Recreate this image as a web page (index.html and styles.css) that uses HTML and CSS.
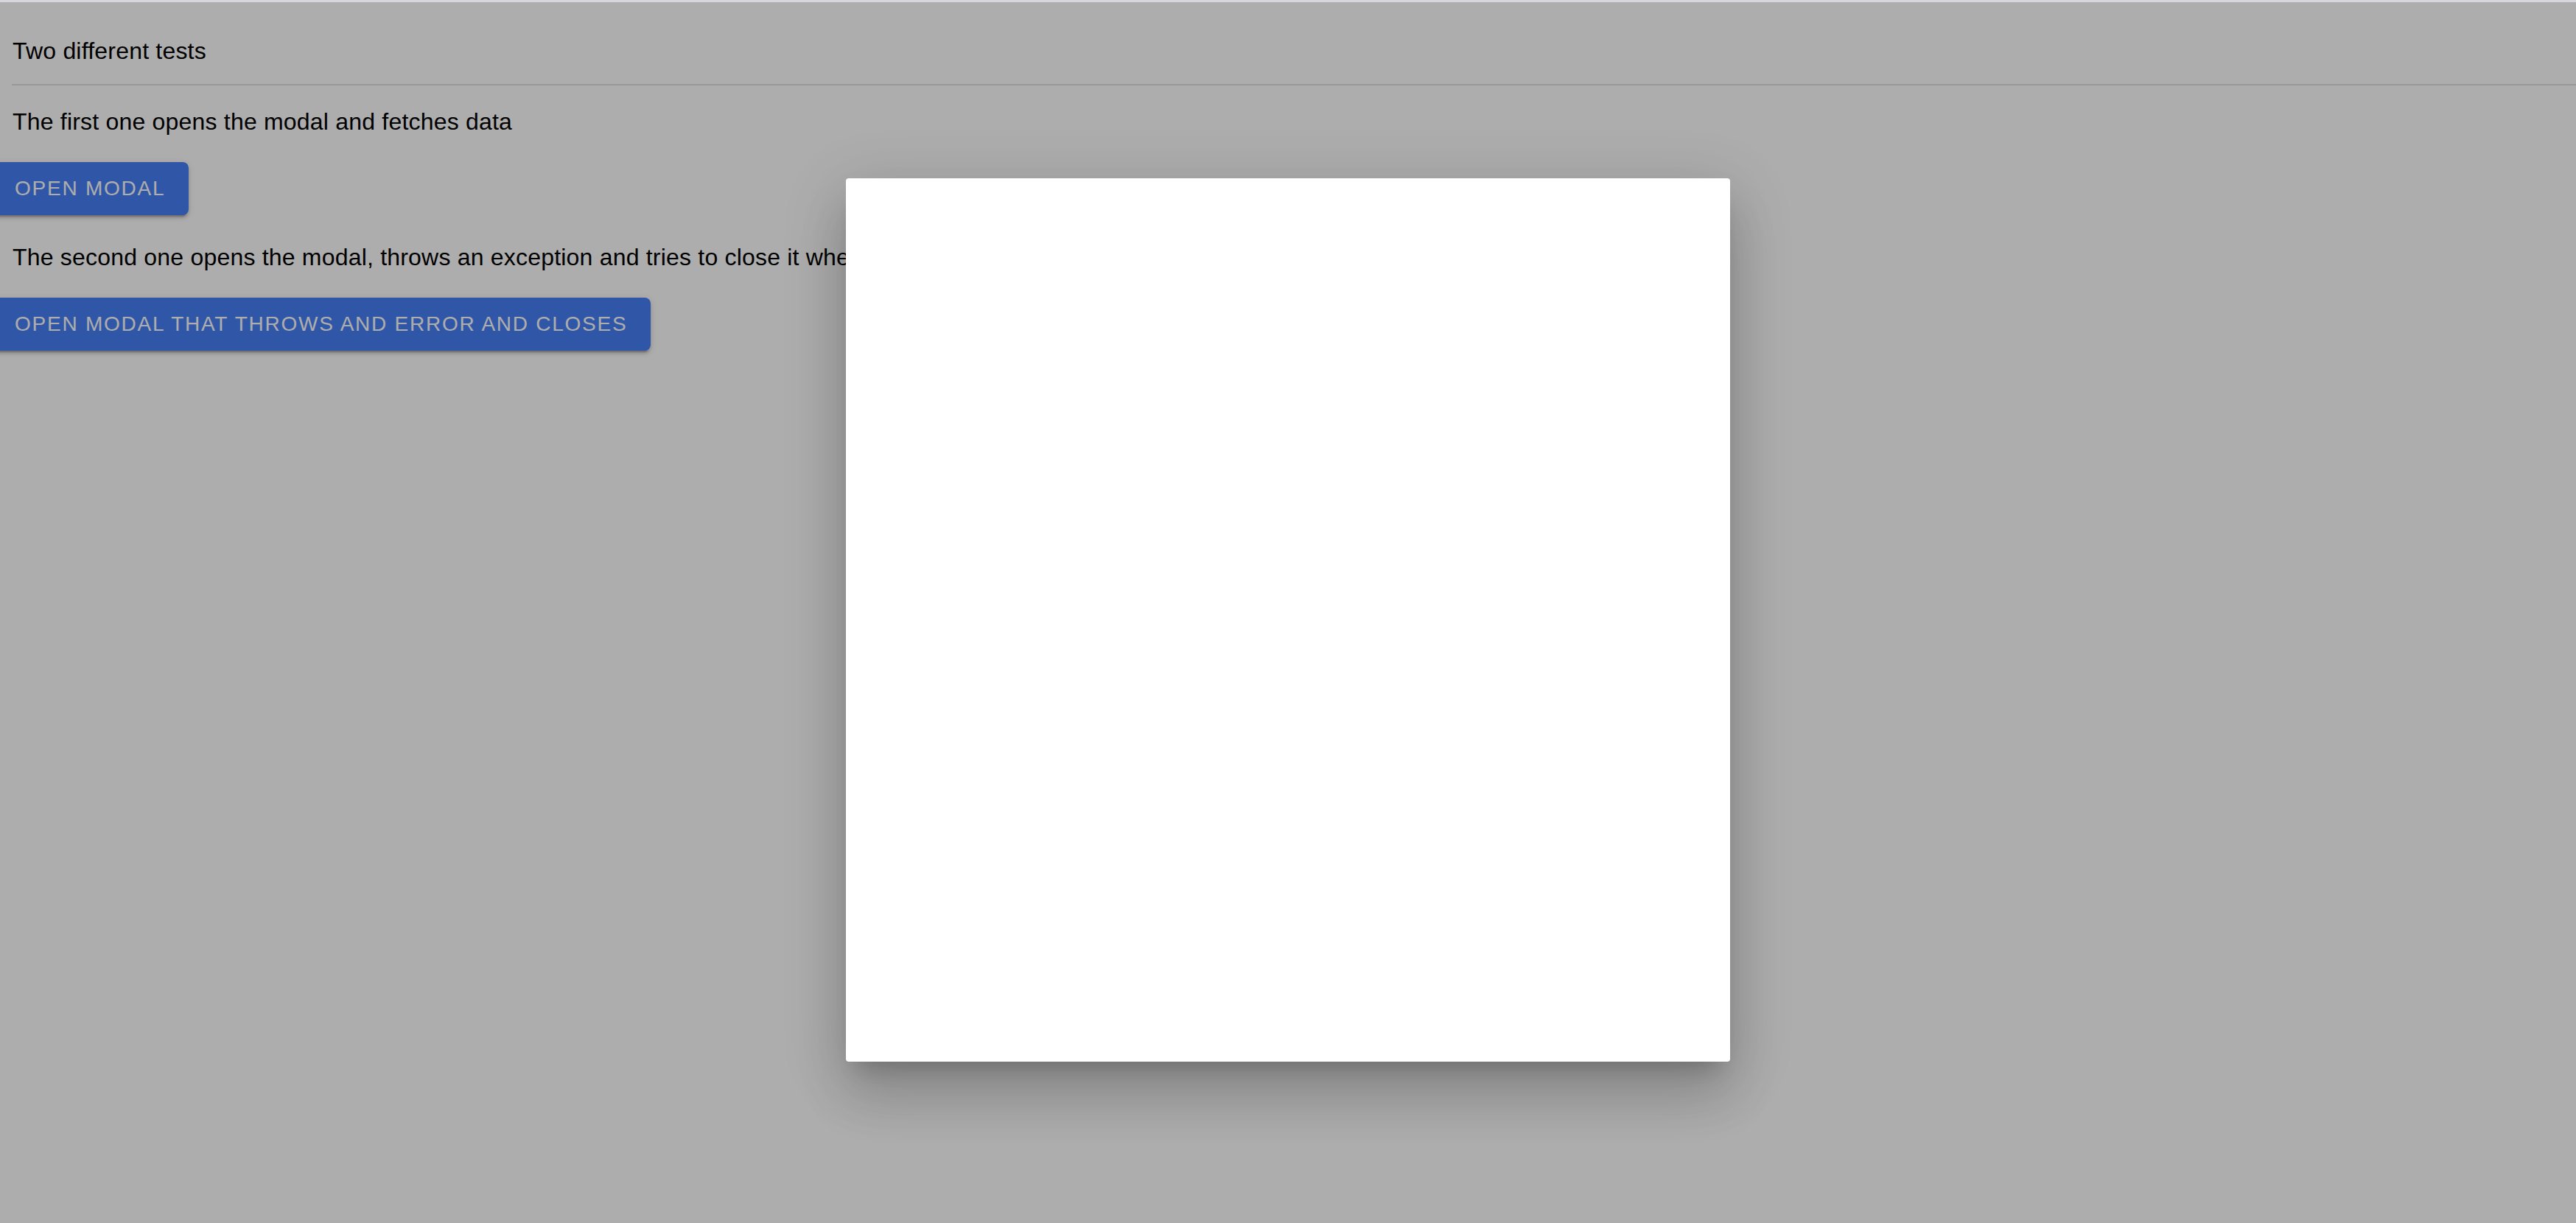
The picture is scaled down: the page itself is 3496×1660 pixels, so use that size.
FILE: index.html
```html
<!DOCTYPE html>
<html lang="en">
<head>
<meta charset="utf-8">
<title>Two different tests</title>
<link rel="stylesheet" href="styles.css">
</head>
<body>
<div class="topbar"></div>
<main class="page">
  <p class="line first">Two different tests</p>
  <hr class="rule">
  <p class="line second">The first one opens the modal and fetches data</p>
  <button class="btn btn-one" type="button">Open modal</button>
  <p class="line third">The second one opens the modal, throws an exception and tries to close it when the error is caught</p>
  <button class="btn btn-two" type="button">Open modal that throws and error and closes</button>
</main>
<div class="backdrop">
  <div class="dialog" role="dialog"></div>
</div>
</body>
</html>
```
FILE: styles.css
```css
html, body {
  margin: 0;
  padding: 0;
  background: #ffffff;
}
body {
  font-family: "Liberation Sans", Arial, Helvetica, sans-serif;
  color: #000;
  overflow: hidden;
  height: 1660px;
}
.topbar {
  position: fixed;
  top: 0;
  left: 0;
  right: 0;
  height: 3px;
  background: #d7d6dd;
  z-index: 20;
}
.page {
  padding: 51px 0 0 16px;
}
.line {
  margin: 0;
  font-size: 32px;
  line-height: 36px;
  letter-spacing: 0.2px;
  white-space: nowrap;
  padding-left: 1px;
}
.rule {
  margin: 27px 0 0 0;
  border: 0;
  height: 2px;
  background: #e1e1e1;
}
.second { margin-top: 31px; }
.third { margin-top: 39px; }
.btn {
  display: block;
  margin: 37px 0 0 -28px;
  height: 72px;
  padding: 0 32px;
  border: 0;
  border-radius: 8px;
  background: #4880f7;
  color: #ffffff;
  font-family: "Liberation Sans", Arial, Helvetica, sans-serif;
  font-size: 28px;
  letter-spacing: 1.75px;
  text-transform: uppercase;
  box-shadow: 0 6px 2px -4px rgba(0,0,0,.2), 0 4px 4px 0 rgba(0,0,0,.14), 0 2px 10px 0 rgba(0,0,0,.12);
}
.backdrop {
  position: fixed;
  top: 0;
  left: 0;
  right: 0;
  bottom: 0;
  background: rgba(0,0,0,.32);
  display: flex;
  justify-content: center;
  align-items: flex-start;
  padding-top: 242px;
  z-index: 10;
}
.dialog {
  width: 1200px;
  height: 1199px;
  background: #ffffff;
  border-radius: 4px;
  box-shadow: 0 22px 30px -14px rgba(0,0,0,.2), 0 48px 76px 6px rgba(0,0,0,.14), 0 18px 92px 16px rgba(0,0,0,.12);
}
```
